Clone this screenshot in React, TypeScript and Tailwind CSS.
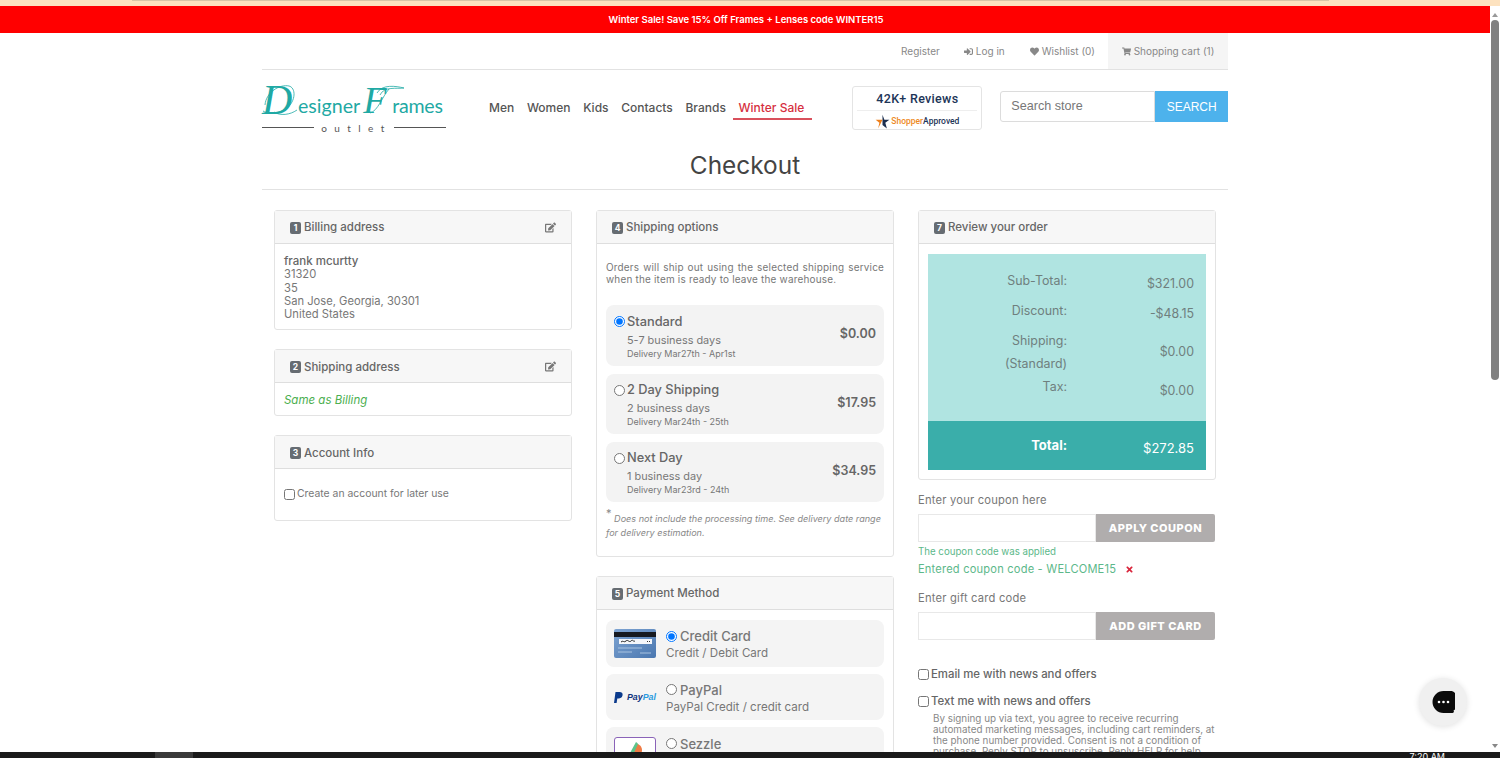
import type { ReactNode } from "react";
import { FaEdit, FaHeart, FaShoppingCart, FaSignInAlt, FaTimes } from "react-icons/fa";

const navLinks = ["Men", "Women", "Kids", "Contacts", "Brands"];

const shippingOptions = [
  { name: "Standard", days: "5-7 business days", range: "Delivery Mar27th - Apr1st", price: "$0.00", checked: true, h: "h-[61px]" },
  { name: "2 Day Shipping", days: "2 business days", range: "Delivery Mar24th - 25th", price: "$17.95", checked: false, h: "h-[60px]" },
  { name: "Next Day", days: "1 business day", range: "Delivery Mar23rd - 24th", price: "$34.95", checked: false, h: "h-[60px]" },
];

const Card = ({ n, title, edit, children }: { n: number; title: string; edit?: boolean; children: ReactNode }) => (
  <section className="rounded-[3px] border border-[#e3e3e3] bg-white">
    <header className="flex h-[33px] items-center border-b border-[#dedede] bg-[#f7f7f7] pl-[15px] pr-[15px] pt-[2px] text-[11.5px] font-medium text-[#666]">
      <span className="mr-[3px] flex h-[12px] w-[11px] items-center justify-center rounded-[2px] bg-[#666c72] text-[8.5px] font-bold text-white">{n}</span>
      <span>{title}</span>
      {edit && <FaEdit className="ml-auto -mt-[2px] text-[11px] text-[#777]" />}
    </header>
    {children}
  </section>
);

const Logo = () => (
  <div className="relative w-[184px] text-[#1fa9a4]">
    <div className="flex h-[36px] items-end font-['Lato'] text-[19.6px] leading-[26px]">
      <span className="w-[36px] font-['Liberation_Serif'] text-[42px] leading-[38px] italic">D</span>
      <span>esigner</span>
      <span className="w-[32px] pl-[3px] font-['Liberation_Serif'] text-[38px] leading-[38px] italic">F</span>
      <span className="tracking-[-0.2px]">rames</span>
    </div>
    <svg className="absolute left-0 top-0 h-[36px] w-[184px]" viewBox="0 0 184 36" fill="none" stroke="#1fa9a4" strokeWidth="0.8">
      <path d="M3 22C4 9 18 1 27 3C35 5 34 22 20 28C12 31 4 30 1 28" />
      <path d="M12 29C18 33 28 32 35 27" />
      <path d="M115 10C120 1 134 3 142 5C135 6 122 3 118 12M108 30C116 28 120 14 127 6" />
    </svg>
    <div className="mt-[4px] flex items-center text-[10px] leading-[10px] text-[#555]">
      <span className="h-px flex-1 bg-[#555]" />
      <span className="px-[2px] pl-[7px] font-['Lato'] tracking-[7.4px]">outlet</span>
      <span className="h-px flex-1 bg-[#555]" />
    </div>
  </div>
);

const ReviewsBadge = () => (
  <div className="ml-[40px] flex h-[44px] w-[130px] flex-col items-center rounded-[3px] border border-[#e4e4e4] px-[4px] pt-[4px]">
    <div className="w-full border-b border-[#eee] pb-[3px] text-center font-['Roboto'] text-[12.5px] leading-[16px] font-medium tracking-[0.3px] text-[#1d3557]">42K+ Reviews</div>
    <div className="mt-[3px] flex items-center font-['Roboto'] text-[8.5px] leading-[12px] font-medium">
      <svg className="mr-[1px] h-[15px] w-[15px]" viewBox="0 0 24 24">
        <path d="M12 1l3 8h8l-6.500 5 2.500 9-7-5.500z" fill="#1d2f4f" />
        <path d="M12 9L5 23l2-9-6-5h8z" fill="#ee7f1b" />
      </svg>
      <span className="text-[#ee8a24]">Shopper</span>
      <span className="text-[#1d3557]">Approved</span>
    </div>
  </div>
);

const CreditCardArt = () => (
  <svg className="h-[29px] w-[42px] shrink-0" viewBox="0 0 42 29">
    <defs>
      <linearGradient id="cardBg" x1="0" y1="0" x2="1" y2="1">
        <stop offset="0" stopColor="#7ea4d2" />
        <stop offset="1" stopColor="#4a77b0" />
      </linearGradient>
    </defs>
    <rect width="42" height="29" rx="2" fill="url(#cardBg)" />
    <rect y="3" width="42" height="5" fill="#16191f" />
    <rect x="5" y="10" width="33" height="5" fill="#f4f6fa" />
    <path d="M7 13c2-2 3 1 5-1s3 2 5 0 2 1 4 0" fill="none" stroke="#222" strokeWidth="1" />
    <path d="M33 12.500h4" stroke="#333" strokeWidth="1" strokeDasharray="1 1" />
    <path d="M4 19h24M4 23h14M26 24h11" stroke="#a9c3e0" strokeWidth="1" />
  </svg>
);

const PayPalArt = () => (
  <div className="flex w-[42px] shrink-0 items-center">
    <svg className="h-[11px] w-[9px]" viewBox="0 0 9 11">
      <path d="M1.500 0h4C8 0 9 1.500 8.500 3.500 8 5.800 6.300 6.500 4.500 6.500H3.300L2.600 11H0z" fill="#0b3a8c" />
    </svg>
    <span className="ml-[4px] font-['Liberation_Sans'] text-[8.8px] leading-[11px] font-bold italic">
      <span className="text-[#10357f]">Pay</span>
      <span className="text-[#2a9be0]">Pal</span>
    </span>
  </div>
);

const SezzleArt = () => (
  <div className="flex h-[28px] w-[42px] shrink-0 items-start justify-center rounded-[3px] border border-[#8a63b8] bg-white pt-[2px]">
    <svg className="h-[20px] w-[18px]" viewBox="0 0 18 20">
      <path d="M4 13L10 2c2 1 3 3 2 5l-5 8z" fill="#5cc48c" />
      <path d="M7 15l5-11c4 2 5 6 3 10-2 4-6 4-8 1z" fill="#ef7b45" />
    </svg>
  </div>
);

const PaymentRow = ({ art, name, note, checked, h }: { art: ReactNode; name: string; note: string; checked?: boolean; h: string }) => (
  <div className={`flex ${h} items-center rounded-[8px] bg-[#f4f4f4] pl-[8px]`}>
    {art}
    <div className="ml-[10px] pt-[2px] text-[#777]">
      <label className="flex items-center text-[13px] leading-[16px] font-medium">
        <input type="radio" name="pay" defaultChecked={checked} className="mr-[3px] h-[11px] w-[11px] accent-[#0075ff]" />
        {name}
      </label>
      <div className="mt-[1px] text-[11.6px] leading-[16px]">{note}</div>
    </div>
  </div>
);

const Total = ({ label, value, h, vOffset }: { label: ReactNode; value: string; h: string; vOffset: string }) => (
  <div className={`flex ${h} items-center`}>
    <div className="w-[139px] text-right text-[12.4px] leading-[23.5px]">{label}</div>
    <div className={`flex-1 pr-[12px] text-right text-[12.4px] ${vOffset}`}>{value}</div>
  </div>
);

const CodeField = ({ label, action }: { label: string; action: string }) => (
  <div>
    <div className="text-[11.2px] leading-[16px] tracking-[0.2px] text-[#777]">{label}</div>
    <div className="mt-[6px] flex h-[28px]">
      <input className="w-[178px] border border-[#e8e8e8] bg-white" />
      <button className="w-[119px] rounded-r-[2px] bg-[#b0adad] text-[11px] font-extrabold tracking-[0.5px] text-white">{action}</button>
    </div>
  </div>
);

const App = () => {
  return (
    <div className="flex h-[758px] flex-col overflow-hidden bg-white font-['Inter','Liberation_Sans',sans-serif]">
      <div className="h-[6px] shrink-0 bg-[#fde2bf]">
        <div className="mx-[132px] h-px w-[1197px] bg-[#d9c5a6]" />
      </div>

      <div className="flex min-h-0 flex-1">
        <main className="relative min-w-0 flex-1 overflow-hidden">
          <div className="flex h-[27px] items-center justify-center bg-[#ff0000] pl-[2px] pt-[1px] text-[9.5px] font-semibold text-white">
            Winter Sale! Save 15% Off Frames + Lenses code WINTER15
          </div>

          <div className="mx-auto w-[966px]">
            <div className="flex h-[37px] items-center justify-end border-b border-[#e2e2e2] text-[10px] text-[#888]">
              <a className="mr-[24px]">Register</a>
              <a className="mr-[25px] flex items-center gap-[3px]"><FaSignInAlt className="text-[9px]" />Log in</a>
              <a className="mr-[13px] flex items-center gap-[3px]"><FaHeart className="text-[9px]" />Wishlist (0)</a>
              <a className="flex h-full w-[120px] items-center justify-center gap-[3px] bg-[#f5f5f5]"><FaShoppingCart className="text-[9px]" />Shopping cart (1)</a>
            </div>

            <div className="flex h-[60px] items-center pt-[15px]">
              <Logo />
              <nav className="ml-[43px] flex items-center text-[12px] font-medium text-[#555]">
                {navLinks.map((l) => (
                  <a key={l} className="mr-[12.7px]">{l}</a>
                ))}
                <a className="-ml-[6px] border-b-2 border-[#d9505c] pb-[1px] pl-[6px] pr-[8px] pt-[4px] text-[#d6303f]">Winter Sale</a>
              </nav>
              <ReviewsBadge />
              <div className="mb-[2px] ml-[18px] flex h-[31px] flex-1">
                <input placeholder="Search store" className="w-[155px] rounded-l-[3px] border border-[#dcdcdc] pl-[10px] font-['Liberation_Sans'] text-[12.6px] placeholder:text-[#777]" />
                <button className="flex-1 bg-[#4db2ec] font-['Liberation_Sans'] text-[12px] text-white">SEARCH</button>
              </div>
            </div>

            <h1 className="mt-[20px] h-[40px] border-b border-[#e2e2e2] text-center text-[24.4px] leading-[30px] font-normal text-[#444]">Checkout</h1>

            <div className="mt-[20px] grid grid-cols-3">
              <div className="flex flex-col gap-[19px] px-[12px]">
                <Card n={1} title="Billing address" edit>
                  <div className="px-[9px] pb-[8px] pt-[11px] text-[11.2px] leading-[13.3px] text-[#777]">
                    <div className="text-[11.5px] font-medium text-[#666]">frank mcurtty</div>
                    <div>31320</div>
                    <div>35</div>
                    <div>San Jose, Georgia, 30301</div>
                    <div>United States</div>
                  </div>
                </Card>
                <Card n={2} title="Shipping address" edit>
                  <div className="px-[9px] pb-[8px] pt-[10px] text-[11.5px] leading-[14px] text-[#4caf50] italic">Same as Billing</div>
                </Card>
                <Card n={3} title="Account Info">
                  <label className="flex h-[51px] items-start px-[9px] pt-[18px] text-[10.4px] leading-[14px] text-[#777]">
                    <input type="checkbox" className="mr-[2px] mt-[2px] h-[11px] w-[11px]" />
                    Create an account for later use
                  </label>
                </Card>
              </div>

              <div className="flex flex-col gap-[19px] px-[12px]">
                <Card n={4} title="Shipping options">
                  <div className="px-[9px] pb-[16px] pt-[17px]">
                    <div className="text-[9.95px] leading-[12px] tracking-[0.2px] text-[#777]">
                      <p className="whitespace-nowrap [text-align-last:justify]">Orders will ship out using the selected shipping service</p>
                      <p>when the item is ready to leave the warehouse.</p>
                    </div>
                    <div className="mt-[20px] flex flex-col gap-[8px]">
                      {shippingOptions.map((o) => (
                        <div key={o.name} className={`flex ${o.h} items-center rounded-[8px] bg-[#f3f3f3] pl-[8px] pr-[8px] text-[#777]`}>
                          <div className="pt-[2px]">
                            <label className="flex items-center text-[12.8px] leading-[16px] font-medium text-[#666]">
                              <input type="radio" name="ship" defaultChecked={o.checked} className="mr-[2px] h-[11px] w-[11px] accent-[#0075ff]" />
                              {o.name}
                            </label>
                            <div className="ml-[13px] mt-[3px] text-[10.9px] leading-[15px]">{o.days}</div>
                            <div className="ml-[13px] text-[9px] leading-[12px]">{o.range}</div>
                          </div>
                          <div className="ml-auto pb-[2px] text-[12.5px] font-semibold text-[#666]">{o.price}</div>
                        </div>
                      ))}
                    </div>
                    <p className="mt-[10px] text-[9.1px] leading-[14px] text-[#888] italic">
                      <sup className="text-[11px] not-italic">*</sup> Does not include the processing time. See delivery date range
                      <br />
                      for delivery estimation.
                    </p>
                  </div>
                </Card>
                <Card n={5} title="Payment Method">
                  <div className="flex flex-col gap-[7px] px-[9px] pt-[10px]">
                    <PaymentRow art={<CreditCardArt />} name="Credit Card" note="Credit / Debit Card" checked h="h-[47px]" />
                    <PaymentRow art={<PayPalArt />} name="PayPal" note="PayPal Credit / credit card" h="h-[46px]" />
                    <PaymentRow art={<SezzleArt />} name="Sezzle" note="Buy now, pay later" h="h-[48px]" />
                  </div>
                </Card>
              </div>

              <div className="px-[12px]">
                <Card n={7} title="Review your order">
                  <div className="px-[9px] pb-[9px] pt-[10px]">
                    <div className="bg-[#b0e4e1] text-[#6f7f7e]">
                      <div className="h-[167px] pt-[12px]">
                        <Total label="Sub-Total:" value="$321.00" h="h-[30px]" vOffset="pt-[7px]" />
                        <Total label="Discount:" value="-$48.15" h="h-[30px]" vOffset="pt-[7px]" />
                        <Total label={<>Shipping:<br />(Standard)</>} value="$0.00" h="mt-[3px] h-[46px]" vOffset="" />
                        <Total label="Tax:" value="$0.00" h="h-[24px]" vOffset="pt-[8px]" />
                      </div>
                      <div className="flex h-[49px] items-center bg-[#3aaeaa] text-[13px] text-white">
                        <div className="w-[139px] text-right font-bold">Total:</div>
                        <div className="flex-1 pr-[12px] pt-[6px] text-right">$272.85</div>
                      </div>
                    </div>
                  </div>
                </Card>

                <div className="mt-[12px]">
                  <CodeField label="Enter your coupon here" action="APPLY COUPON" />
                  <div className="mt-[4px] text-[9.7px] leading-[12px] text-[#5cb88a]">The coupon code was applied</div>
                  <div className="mt-[4px] flex items-center text-[11.1px] leading-[14px] tracking-[0.2px] text-[#5cb88a]">
                    Entered coupon code - WELCOME15
                    <FaTimes className="ml-[9px] text-[9px] text-[#d9263c]" />
                  </div>
                  <div className="mt-[14px]">
                    <CodeField label="Enter gift card code" action="ADD GIFT CARD" />
                  </div>
                  <label className="mt-[27px] flex items-center text-[11.4px] leading-[14px] font-medium text-[#666]">
                    <input type="checkbox" className="mr-[2px] h-[11px] w-[11px]" />
                    Email me with news and offers
                  </label>
                  <label className="mt-[13px] flex items-center text-[11.4px] leading-[14px] font-medium text-[#666]">
                    <input type="checkbox" className="mr-[2px] h-[11px] w-[11px]" />
                    Text me with news and offers
                  </label>
                  <p className="ml-[15px] mt-[5px] whitespace-nowrap text-[9.85px] leading-[11px] text-[#888]">
                    By signing up via text, you agree to receive recurring
                    <br />
                    automated marketing messages, including cart reminders, at
                    <br />
                    the phone number provided. Consent is not a condition of
                    <br />
                    purchase. Reply STOP to unsuscribe. Reply HELP for help.
                  </p>
                </div>
              </div>
            </div>
          </div>

          {/* chat launcher */}
          <div className="absolute left-[1419px] top-[672px] flex h-[48px] w-[48px] items-center justify-center rounded-full bg-[#f0f0f0] shadow-[0_1px_6px_rgba(0,0,0,0.12)]">
            <svg className="h-[23px] w-[23px]" viewBox="0 0 23 23">
              <path d="M11.500 0a11 11 0 1 0 0 22h9a1.500 1.500 0 0 0 1-2.500 11 11 0 0 0-10-19.500z" fill="#0b0b0b" />
              <circle cx="7" cy="11" r="1.300" fill="#fff" />
              <circle cx="11.500" cy="11" r="1.300" fill="#fff" />
              <circle cx="16" cy="11" r="1.300" fill="#fff" />
            </svg>
          </div>
        </main>

        <div className="flex w-[10px] shrink-0 flex-col items-center bg-white">
          <div className="mt-[7px] h-0 w-0 border-x-[3.5px] border-b-[4px] border-x-transparent border-b-[#999]" />
          <div className="mt-[3px] h-[360px] w-[8px] rounded-[4px] bg-[#808080]" />
          <div className="mb-[4px] mt-auto h-0 w-0 border-x-[3.5px] border-t-[4px] border-x-transparent border-t-[#888]" />
        </div>
      </div>

      <footer className="flex h-[6px] shrink-0 items-start overflow-hidden bg-[#1a1a1a]">
        <div className="ml-[155px] h-full w-[38px] bg-[#3a3a3a]" />
        <div className="ml-auto mr-[55px] text-[9px] leading-[10px] text-white">7:20 AM</div>
      </footer>
    </div>
  );
};

export default App;
